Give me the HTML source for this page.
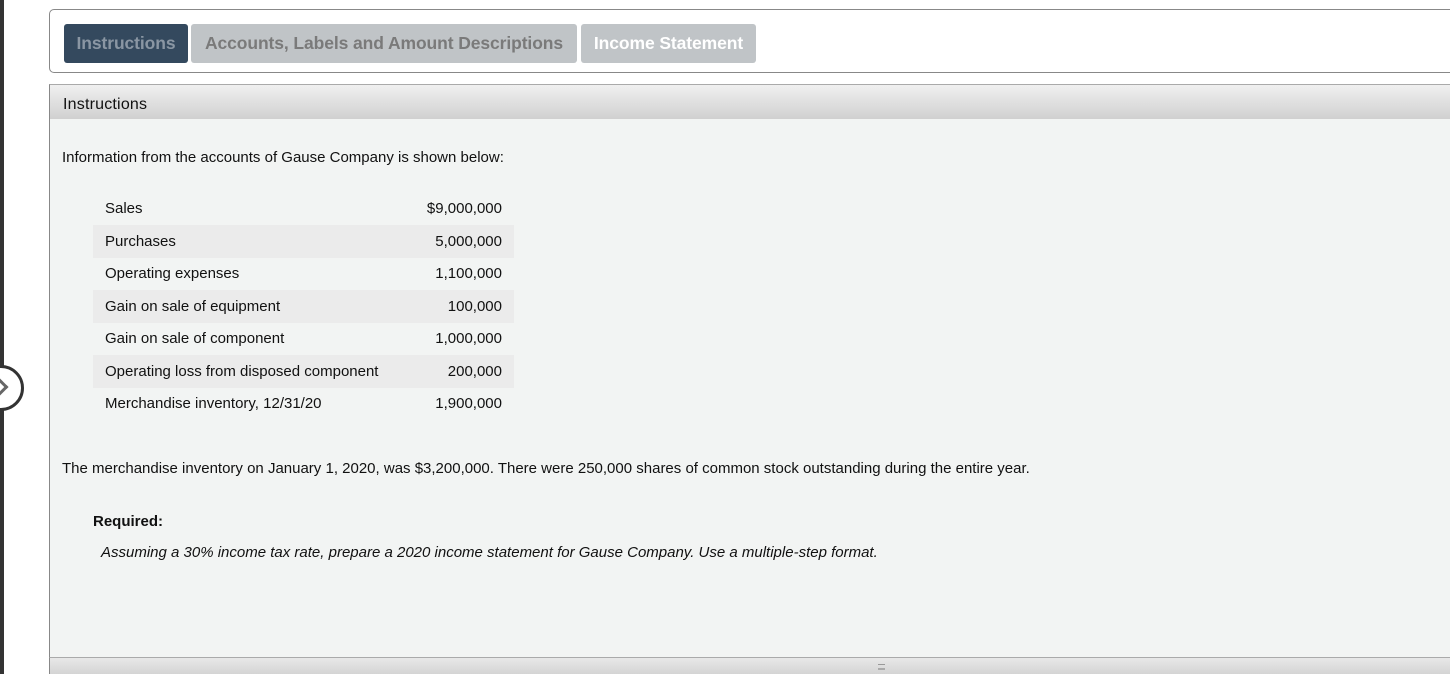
<!DOCTYPE html>
<html><head><style>
*{margin:0;padding:0;box-sizing:border-box}
html,body{width:1450px;height:674px;overflow:hidden}
body{background:#fff;font-family:"Liberation Sans",Arial,sans-serif;position:relative;color:#111}
.lbar{position:absolute;left:0;top:0;width:4px;height:674px;background:#333}
.circ{position:absolute;left:-22px;top:365px;width:46px;height:46px;border:3px solid #333;border-radius:50%;background:#fff}
.chev{position:absolute;left:-6px;top:381px;width:12px;height:12px;border-top:3px solid #666;border-right:3px solid #666;transform:rotate(45deg)}
.tabsbox{position:absolute;left:49px;top:9px;width:1420px;height:64px;border:1px solid #888;border-radius:5px}
.tab{position:absolute;top:24px;height:39px;border-radius:3px;font-weight:bold;font-size:17.5px;letter-spacing:-0.1px;line-height:39px;text-align:center;white-space:nowrap}
.panel{position:absolute;left:49px;top:84px;width:1410px;height:573px;border-left:1px solid #888;border-top:1px solid #aaa;background:#f2f4f3}
.hdr{height:34px;background:linear-gradient(#f0f0f0,#d0d0d0);font-size:16px;line-height:39px;padding-left:13px;letter-spacing:0.2px}
.foot{position:absolute;left:49px;top:657px;width:1410px;height:17px;border-top:1px solid #aaa;border-left:1px solid #888;background:linear-gradient(#e8e8e8,#d4d4d4)}
.grip{position:absolute;left:828px;top:6px;width:7px;height:6px;border-top:1px solid #999;border-bottom:2px solid #aaa}
.t{position:absolute;font-size:15px;white-space:nowrap}
.row{position:absolute;left:93px;width:421px;height:32.5px;font-size:15px;line-height:34px}
.row.s{background:#ebebeb}
.row span{position:absolute;left:12px}
.row b{position:absolute;right:12px;font-weight:normal}
</style></head><body>
<div class="lbar"></div>
<div class="circ"></div>
<div class="chev"></div>
<div class="tabsbox"></div>
<div class="tab" style="left:64px;width:124px;background:#34495e;color:#8a96a3">Instructions</div>
<div class="tab" style="left:191px;width:386px;background:#c0c4c7;color:#7a7a7a">Accounts, Labels and Amount Descriptions</div>
<div class="tab" style="left:581px;width:175px;background:#c0c4c7;color:#fff">Income Statement</div>
<div class="panel"><div class="hdr">Instructions</div></div>
<div class="t" style="left:62px;top:149px">Information from the accounts of Gause Company is shown below:</div>
<div class="row" style="top:192px"><span>Sales</span><b>$9,000,000</b></div>
<div class="row s" style="top:225px"><span>Purchases</span><b>5,000,000</b></div>
<div class="row" style="top:257px"><span>Operating expenses</span><b>1,100,000</b></div>
<div class="row s" style="top:290px"><span>Gain on sale of equipment</span><b>100,000</b></div>
<div class="row" style="top:322px"><span>Gain on sale of component</span><b>1,000,000</b></div>
<div class="row s" style="top:355px"><span>Operating loss from disposed component</span><b>200,000</b></div>
<div class="row" style="top:387px"><span>Merchandise inventory, 12/31/20</span><b>1,900,000</b></div>
<div class="t" style="left:62px;top:460px">The merchandise inventory on January 1, 2020, was $3,200,000. There were 250,000 shares of common stock outstanding during the entire year.</div>
<div class="t" style="left:93px;top:513px;font-weight:bold">Required:</div>
<div class="t" style="left:101px;top:544px;font-style:italic">Assuming a 30% income tax rate, prepare a 2020 income statement for Gause Company. Use a multiple-step format.</div>
<div class="foot"><div class="grip"></div></div>
</body></html>
